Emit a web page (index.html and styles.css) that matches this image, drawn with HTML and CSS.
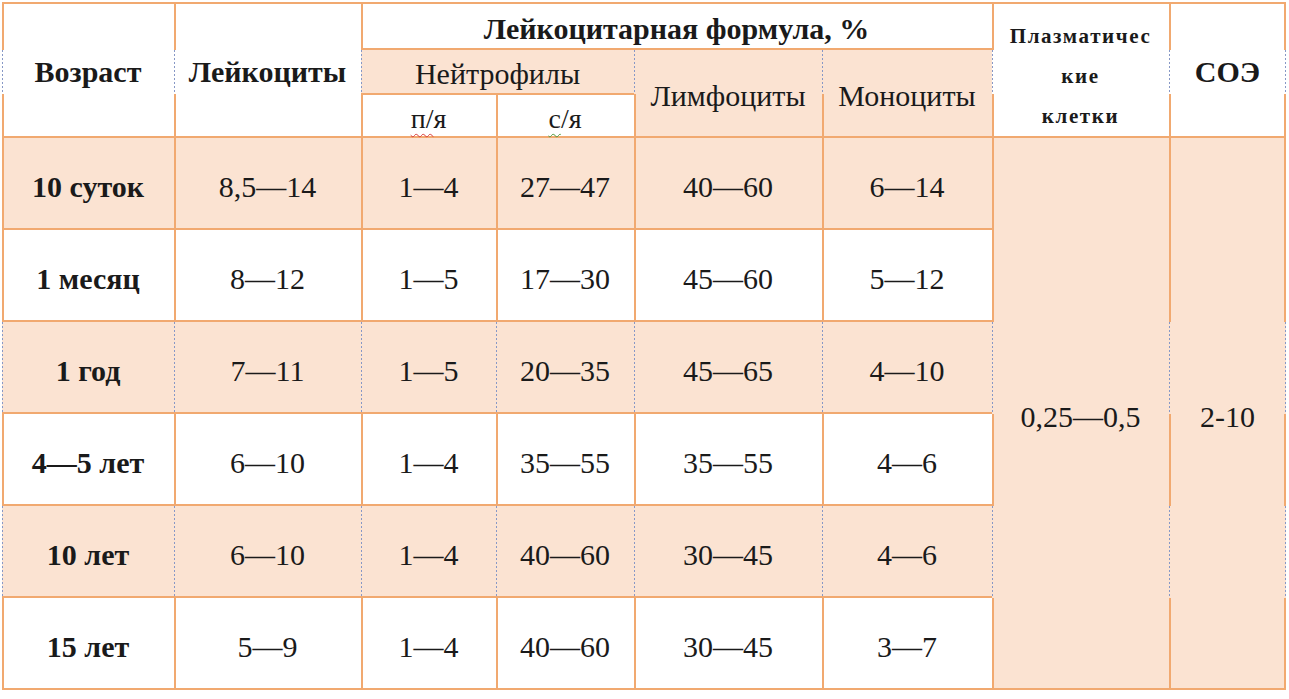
FILE: index.html
```html
<!DOCTYPE html>
<html lang="ru">
<head>
<meta charset="utf-8">
<title>Лейкоцитарная формула</title>
<link rel="stylesheet" href="styles.css">
</head>
<body>
<table class="grid">
  <colgroup>
    <col class="w1"><col class="w2"><col class="w3"><col class="w4"><col class="w5"><col class="w6"><col class="w7"><col class="w8">
  </colgroup>
  <thead>
    <tr class="h1">
      <th rowspan="3" class="hs hv">Возраст</th>
      <th rowspan="3" class="hs hv">Лейкоциты</th>
      <th colspan="4" class="hs sl formula">Лейкоцитарная формула, %</th>
      <th rowspan="3" class="hs hv plasma">Плазматичес<br>кие<br>клетки</th>
      <th rowspan="3" class="hs hv hvr">СОЭ</th>
    </tr>
    <tr class="h2">
      <th colspan="2" class="sub fill dl">Нейтрофилы</th>
      <th rowspan="2" class="sub fill h23">Лимфоциты</th>
      <th rowspan="2" class="sub fill h23">Моноциты</th>
    </tr>
    <tr class="h3">
      <th class="sub sl small"><span class="sq red">п/</span>я</th>
      <th class="sub sl small"><span class="sq green">с</span>/я</th>
    </tr>
  </thead>
  <tbody>
    <tr class="r fill">
      <td class="age sl">10 суток</td><td class="sl">8,5—14</td><td class="sl">1—4</td><td class="sl">27—47</td><td class="sl">40—60</td><td class="sl">6—14</td>
      <td rowspan="6" class="tall bv">0,25—0,5</td>
      <td rowspan="6" class="tall bv bvr">2-10</td>
    </tr>
    <tr class="r">
      <td class="age sl">1 месяц</td><td class="sl">8—12</td><td class="sl">1—5</td><td class="sl">17—30</td><td class="sl">45—60</td><td class="sl">5—12</td>
    </tr>
    <tr class="r fill">
      <td class="age dl">1 год</td><td class="dl">7—11</td><td class="dl">1—5</td><td class="dl">20—35</td><td class="dl">45—65</td><td class="dl">4—10</td>
    </tr>
    <tr class="r">
      <td class="age sl">4—5 лет</td><td class="sl">6—10</td><td class="sl">1—4</td><td class="sl">35—55</td><td class="sl">35—55</td><td class="sl">4—6</td>
    </tr>
    <tr class="r fill">
      <td class="age dl">10 лет</td><td class="dl">6—10</td><td class="dl">1—4</td><td class="dl">40—60</td><td class="dl">30—45</td><td class="dl">4—6</td>
    </tr>
    <tr class="r">
      <td class="age sl">15 лет</td><td class="sl">5—9</td><td class="sl">1—4</td><td class="sl">40—60</td><td class="sl">30—45</td><td class="sl">3—7</td>
    </tr>
  </tbody>
</table>
</body>
</html>
```

FILE: styles.css
```css
:root {
  --o: #f1a970;
  --b: #8798c6;
  --fill: #fbe3d2;
  --ink: #1a1a1a;
}

html, body {
  margin: 0;
  padding: 0;
  background: #ffffff;
}

.grid {
  margin: 2px 0 0 2px;
  width: 1284px;
  table-layout: fixed;
  border-collapse: separate;
  border-spacing: 0;
  border-top: 2px solid var(--o);
  font-family: "Liberation Serif", "Times New Roman", serif;
  font-size: 30px;
  color: var(--ink);
}

.w1 { width: 172px; }
.w2 { width: 187px; }
.w3 { width: 135px; }
.w4 { width: 138px; }
.w5 { width: 188px; }
.w6 { width: 170px; }
.w7 { width: 177px; }
.w8 { width: 117px; }

th, td {
  box-sizing: border-box;
  padding: 0;
  text-align: center;
  vertical-align: middle;
  border-bottom: 2px solid var(--o);
  background-repeat: no-repeat;
  line-height: 1.15;
}

th { font-weight: bold; }

.h1 { height: 46px; }
.h2 { height: 44px; }
.h3 { height: 43px; }
.r { height: 92px; }

.fill > td, .fill > th, th.fill { background-color: var(--fill); }
.tall { background-color: var(--fill); }

/* solid left line */
.sl {
  background-image: linear-gradient(var(--o), var(--o));
  background-size: 2px 100%;
  background-position: 0 0;
}

/* dotted left line */
.dl {
  background-image: repeating-linear-gradient(to bottom, var(--b) 0 2px, transparent 2px 4px);
  background-size: 1px 100%;
  background-position: 0 0;
}

/* header cells spanning 3 rows: dotted in middle band */
.hv {
  background-image:
    linear-gradient(to bottom, var(--o) 0 46px, transparent 46px 90px, var(--o) 90px),
    repeating-linear-gradient(to bottom, var(--b) 0 2px, transparent 2px 4px);
  background-size: 2px 100%, 1px 44px;
  background-position: 0 0, 0 46px;
}
.hvr {
  background-image:
    linear-gradient(to bottom, var(--o) 0 46px, transparent 46px 90px, var(--o) 90px),
    repeating-linear-gradient(to bottom, var(--b) 0 2px, transparent 2px 4px),
    linear-gradient(to bottom, var(--o) 0 46px, transparent 46px 90px, var(--o) 90px),
    repeating-linear-gradient(to bottom, var(--b) 0 2px, transparent 2px 4px);
  background-size: 2px 100%, 1px 44px, 2px 100%, 1px 44px;
  background-position: 0 0, 0 46px, 100% 0, 100% 46px;
}

/* header cells spanning rows 2-3 */
.h23 {
  background-image:
    linear-gradient(to bottom, transparent 0 44px, var(--o) 44px),
    repeating-linear-gradient(to bottom, var(--b) 0 2px, transparent 2px 4px);
  background-size: 2px 100%, 1px 44px;
  background-position: 0 0, 0 0;
}

/* body cells spanning all 6 rows */
.bv {
  background-image:
    linear-gradient(to bottom, var(--o) 0 184px, transparent 184px 276px, var(--o) 276px 368px, transparent 368px 460px, var(--o) 460px),
    repeating-linear-gradient(to bottom, var(--b) 0 2px, transparent 2px 4px),
    repeating-linear-gradient(to bottom, var(--b) 0 2px, transparent 2px 4px);
  background-size: 2px 100%, 1px 92px, 1px 92px;
  background-position: 0 0, 0 184px, 0 368px;
}
.bvr {
  background-image:
    linear-gradient(to bottom, var(--o) 0 184px, transparent 184px 276px, var(--o) 276px 368px, transparent 368px 460px, var(--o) 460px),
    repeating-linear-gradient(to bottom, var(--b) 0 2px, transparent 2px 4px),
    repeating-linear-gradient(to bottom, var(--b) 0 2px, transparent 2px 4px),
    linear-gradient(to bottom, var(--o) 0 184px, transparent 184px 276px, var(--o) 276px 368px, transparent 368px 460px, var(--o) 460px),
    repeating-linear-gradient(to bottom, var(--b) 0 2px, transparent 2px 4px),
    repeating-linear-gradient(to bottom, var(--b) 0 2px, transparent 2px 4px);
  background-size: 2px 100%, 1px 92px, 1px 92px, 2px 100%, 1px 92px, 1px 92px;
  background-position: 0 0, 0 184px, 0 368px, 100% 0, 100% 184px, 100% 368px;
}

.hs { padding-top: 4px; }
.formula { padding-top: 6px; vertical-align: middle; }
.sub { font-weight: normal; padding-top: 6px; }
.small { font-size: 28px; padding-top: 8px; }

.plasma {
  font-size: 21px;
  line-height: 40px;
  letter-spacing: 1.6px;
  padding-top: 12px;
}

.r > td { padding-top: 9px; }
.tall { padding-top: 7px; }
.age { font-weight: bold; }

.sq {
  text-decoration-line: underline;
  text-decoration-style: wavy;
  text-decoration-thickness: 1px;
  text-underline-offset: 5px;
}
.sq.red { text-decoration-color: #d83c3c; }
.sq.green { text-decoration-color: #4e9a3e; }
```
